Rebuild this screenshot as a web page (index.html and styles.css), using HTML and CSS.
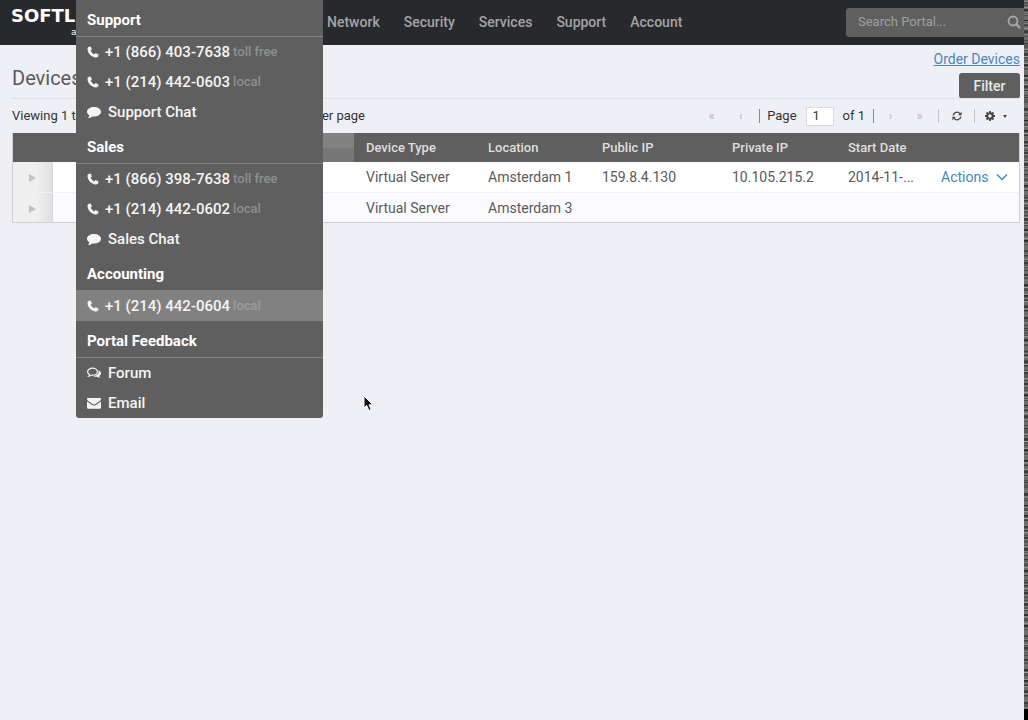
FILE: index.html
```
<!DOCTYPE html>
<html lang="en">
<head>
    <meta charset="UTF-8">
    <meta name="viewport" content="width=device-width, initial-scale=1.0">
    <title>Devices</title>
    <link rel="stylesheet" href="styles.css">
</head>
<body>

<!-- Icons shared by the menu -->
<svg class="defs" width="0" height="0" aria-hidden="true">
    <symbol id="phone" viewBox="0 0 14 14">
        <path d="M2.600.8 4.300.6 5.700 4 4.200 5.600C5 7.300 6.600 8.900 8.400 9.800L10 8.300 13.400 9.800C13.500 11.900 12.400 13.400 10.300 13.400 5.200 13.200.7 8.500.6 3.600.6 2.100 1.300 1.100 2.600.8Z"/>
    </symbol>
    <symbol id="chat" viewBox="0 0 14 14">
        <path d="M7 2C10.900 2 14 4.100 14 6.800S10.900 11.600 7 11.600C6.400 11.600 5.800 11.500 5.200 11.400 4 12.500 2.500 13 .9 13.100 1.700 12.300 2.200 11.400 2.300 10.400 .9 9.500 0 8.200 0 6.800 0 4.100 3.100 2 7 2Z"/>
    </symbol>
    <symbol id="forum" viewBox="0 0 14 14">
        <path d="M5.500 2.200C8.200 2.200 10.400 3.700 10.400 5.700S8.200 9.200 5.500 9.200L4.500 9.100C3.600 9.800 2.700 10.100 1.700 10.200 2.200 9.700 2.400 9.200 2.500 8.500 1.300 7.900 .6 6.900 .6 5.700 .6 3.700 2.800 2.200 5.500 2.200Z" fill="none" stroke="currentColor" stroke-width="1.200"/>
        <path d="M11.500 4.300C13 4.900 14 6 14 7.300 14 8.400 13.300 9.400 12.200 10 12.300 10.700 12.700 11.300 13.200 11.800 12 11.800 11 11.400 10.100 10.700 8.400 10.900 7 10.700 5.800 10 9.200 9.900 11.700 8.200 11.700 5.700Z"/>
    </symbol>
    <symbol id="mail" viewBox="0 0 14 14">
        <path d="M1 2H13Q14 2 14 3 14 4.200 12.800 5L8 8.300Q7 9 6 8.300L1.200 5Q0 4.200 0 3 0 2 1 2Z"/>
        <path d="M0 5.500 5.500 9.300Q7 10.200 8.500 9.300L14 5.500V11.500Q14 12.700 12.800 12.700H1.200Q0 12.700 0 11.500Z"/>
    </symbol>
</svg>

<div class="portal">
    <header class="topbar">
        <a class="logo" href="#">
            <span class="logo-name">SOFTL</span>
            <span class="logo-sub">an</span>
        </a>
        <nav class="nav">
            <a href="#">Network</a>
            <a href="#">Security</a>
            <a href="#">Services</a>
            <a href="#">Support</a>
            <a href="#">Account</a>
        </nav>
        <form class="search">
            <input type="text" placeholder="Search Portal..." aria-label="Search Portal">
            <button type="button" aria-label="Search">
                <svg width="14" height="14" viewBox="0 0 14 14"><circle cx="6" cy="6" r="4.500" fill="none" stroke="currentColor" stroke-width="1.800"/><path d="M9.400 9.400 12.500 12.500" stroke="currentColor" stroke-width="2.200" stroke-linecap="round"/></svg>
            </button>
        </form>
    </header>

    <main>
        <div class="page-head">
            <h1>Devices</h1>
            <div class="page-actions">
                <a href="#">Order Devices</a>
                <button type="button" class="filter">Filter</button>
            </div>
        </div>

        <div class="toolbar">
            <div class="viewing"><span>Viewing 1 to</span><span>per page</span></div>
            <div class="pager">
                <button type="button" class="step" aria-label="First page">«</button>
                <button type="button" class="step" aria-label="Previous page">‹</button>
                <span class="sep"></span>
                <label for="page">Page</label>
                <input type="text" id="page" value="1">
                <span class="of">of 1</span>
                <span class="sep"></span>
                <button type="button" class="step" aria-label="Next page">›</button>
                <button type="button" class="step" aria-label="Last page">»</button>
                <span class="sep light"></span>
                <button type="button" class="tool" aria-label="Refresh">
                    <svg width="10" height="10" viewBox="0 0 10 10"><path d="M1.200 4.500A3.800 3.800 0 0 1 8 2.700M8.800 5.500A3.800 3.800 0 0 1 2 7.300" fill="none" stroke="currentColor" stroke-width="1.400"/><path d="M9.600.8V4.300H6.100ZM.4 9.200V5.700H3.900Z" fill="currentColor"/></svg>
                </button>
                <span class="sep light"></span>
                <button type="button" class="tool gear" aria-label="Settings">
                    <svg width="10" height="10" viewBox="0 0 10 10"><circle cx="5" cy="5" r="2.700" fill="none" stroke="currentColor" stroke-width="2"/><path d="M5 0V2M5 8V10M0 5H2M8 5H10M1.500 1.500 2.800 2.800M7.200 7.200 8.500 8.500M8.500 1.500 7.200 2.800M2.800 7.200 1.500 8.500" stroke="currentColor" stroke-width="1.800"/></svg>
                    <svg width="4" height="3" viewBox="0 0 4 3"><path d="M0 0H4L2 3Z" fill="currentColor"/></svg>
                </button>
            </div>
        </div>

        <table class="devices">
            <colgroup>
                <col class="c-expand"><col class="c-select"><col><col class="c-type"><col class="c-loc"><col class="c-public"><col class="c-private"><col class="c-start"><col class="c-actions">
            </colgroup>
            <thead>
                <tr><th></th><th></th><th class="sorted"></th><th>Device Type</th><th>Location</th><th>Public IP</th><th>Private IP</th><th>Start Date</th><th></th></tr>
            </thead>
            <tbody>
                <tr>
                    <td class="expand"><svg width="7" height="8" viewBox="0 0 7 8"><path d="M0 0 7 4 0 8Z"/></svg></td>
                    <td></td><td></td><td>Virtual Server</td><td>Amsterdam 1</td><td>159.8.4.130</td><td>10.105.215.2</td><td>2014-11-...</td>
                    <td><a class="actions" href="#">Actions <svg width="12" height="8" viewBox="0 0 12 8"><path d="M1 1.500 6 6.500 11 1.500" fill="none" stroke="currentColor" stroke-width="1.500"/></svg></a></td>
                </tr>
                <tr>
                    <td class="expand"><svg width="7" height="8" viewBox="0 0 7 8"><path d="M0 0 7 4 0 8Z"/></svg></td>
                    <td></td><td></td><td>Virtual Server</td><td>Amsterdam 3</td><td></td><td></td><td></td><td></td>
                </tr>
            </tbody>
        </table>
    </main>

    <!-- Contact menu -->
    <div class="menu">
        <h2>Support</h2>
        <a class="call" href="#"><svg><use href="#phone"/></svg>+1 (866) 403-7638 <small>toll free</small></a>
        <a class="call" href="#"><svg><use href="#phone"/></svg>+1 (214) 442-0603 <small>local</small></a>
        <a href="#"><svg><use href="#chat"/></svg>Support Chat</a>
        <h2>Sales</h2>
        <a class="call" href="#"><svg><use href="#phone"/></svg>+1 (866) 398-7638 <small>toll free</small></a>
        <a class="call" href="#"><svg><use href="#phone"/></svg>+1 (214) 442-0602 <small>local</small></a>
        <a href="#"><svg><use href="#chat"/></svg>Sales Chat</a>
        <h2>Accounting</h2>
        <a class="call active" href="#"><svg><use href="#phone"/></svg>+1 (214) 442-0604 <small>local</small></a>
        <h2>Portal Feedback</h2>
        <a href="#"><svg><use href="#forum"/></svg>Forum</a>
        <a href="#"><svg><use href="#mail"/></svg>Email</a>
    </div>

    <svg class="cursor" width="12" height="18" viewBox="0 0 12 18"><path d="M1 1V13L3.700 10.500 6 15.500 8.200 14.500 6 9.800H9.800Z" fill="#111" stroke="#fff" stroke-width="1"/></svg>
</div>
<div class="edge"></div>

</body>
</html>
```
FILE: styles.css
```
* {
    box-sizing: border-box;
}

body {
    display: flex;
    min-height: 100vh;
    margin: 0;
    background: #eff0f5;
    color: #5a5a5c;
    font-family: Roboto, "Liberation Sans", sans-serif;
    font-size: 14px;
    line-height: 20px;
}

button, input {
    font: inherit;
    color: inherit;
    border: 0;
    padding: 0;
    background: none;
}

.defs {
    position: absolute;
}

.portal {
    position: relative;
    flex: 1;
    min-width: 0;
}

/* Noisy strip down the right side */
.edge {
    width: 4px;
    border-bottom: 11px solid #000;
    background:
        repeating-linear-gradient(rgba(255, 255, 255, 0.25) 0 1px, transparent 1px 7px),
        repeating-linear-gradient(rgba(0, 0, 0, 0.3) 0 1px, transparent 1px 5px),
        repeating-linear-gradient(#5c5c5c 0 1px, #7c7c7c 1px 2px, #555 2px 4px, #6c6c6c 4px 9px, #3c3c3c 9px 11px);
}

/* Top bar */
.topbar {
    display: flex;
    align-items: center;
    height: 45px;
    padding-bottom: 1px;
    background: #28292d;
}

.logo {
    width: 315px;
    padding-left: 11px;
    color: #fff;
    text-decoration: none;
    font-family: "DejaVu Sans", sans-serif;
}

.logo span {
    display: block;
    width: 70px;
}

.logo-name {
    font-size: 18px;
    font-weight: bold;
    line-height: 20px;
}

.logo-sub {
    padding-left: 60px;
    font-size: 9px;
    line-height: 12px;
}

.nav {
    display: flex;
    gap: 24px;
    padding-left: 12px;
    font-weight: 500;
}

.nav a {
    color: #a3a3a5;
    text-decoration: none;
}

.search {
    display: flex;
    align-items: center;
    width: 178px;
    height: 29px;
    margin-left: auto;
    padding: 0 3px 0 12px;
    border-radius: 3px 0 0 3px;
    background: #5f5f5f;
    color: #a8a8a8;
    font-size: 13px;
}

.search input {
    flex: 1;
    min-width: 0;
}

.search input::placeholder {
    color: #a0a0a0;
}

.search button {
    display: flex;
}

/* Page heading */
main {
    padding: 0 4px 0 12px;
}

.page-head {
    display: flex;
    justify-content: space-between;
    height: 54px;
    border-bottom: 1px solid #e2e2e5;
}

h1 {
    margin: 0;
    padding-top: 21px;
    font-size: 20px;
    font-weight: normal;
    line-height: 24px;
}

.page-actions {
    display: flex;
    flex-direction: column;
    align-items: flex-end;
    gap: 4px;
    padding-top: 4px;
}

.page-actions a {
    color: #4b86bd;
}

.filter {
    width: 61px;
    height: 25px;
    border-radius: 3px 3px 2px 2px;
    background: #5f5f5f;
    color: #e8e8e8;
    font-weight: 500;
}

.toolbar {
    display: flex;
    justify-content: space-between;
    align-items: center;
    height: 34px;
    color: #333;
    font-size: 13px;
}

.viewing {
    display: flex;
    justify-content: space-between;
    width: 353px;
}

.pager {
    display: flex;
    align-items: center;
    padding-right: 12px;
}

.step {
    width: 29px;
    color: #b5b5b8;
}

.sep {
    width: 1px;
    height: 14px;
    margin: 0 2px 0 4px;
    background: #8a8a8c;
}

.sep.light {
    margin: 0 4px;
    background: #c4c4c6;
}

.pager label {
    padding: 0 9px 0 5px;
}

.pager input {
    width: 28px;
    height: 19px;
    padding-left: 6px;
    border: 1px solid #dcdce0;
    background: #fff;
}

.of {
    padding: 0 4px 0 9px;
}

.tool {
    display: flex;
    justify-content: center;
    align-items: center;
    width: 27px;
    color: #444;
}

.gear {
    gap: 8px;
    width: 29px;
    padding-left: 4px;
}

/* Device list */
.devices {
    width: 100%;
    table-layout: fixed;
    border-collapse: separate;
    border-spacing: 0;
    border: 1px solid #cfcfd3;
    border-top: 0;
}

.c-expand { width: 40px; }
.c-select { width: 36px; }
.c-type { width: 122px; }
.c-loc { width: 114px; }
.c-public { width: 130px; }
.c-private { width: 116px; }
.c-start { width: 93px; }
.c-actions { width: 90px; }

.devices th {
    height: 29px;
    padding: 0 0 0 12px;
    background: #5f5f5f;
    color: #dedede;
    font-size: 13px;
    font-weight: 500;
    text-align: left;
}

.devices th.sorted {
    background: linear-gradient(#828282 50%, #777 50%);
}

.devices td {
    height: 30px;
    padding: 0 0 0 12px;
    background: #fff;
    white-space: nowrap;
}

.devices tr + tr td {
    border-top: 1px solid #f1f1f5;
    background: #fafaff;
}

.devices td.expand,
.devices tr + tr td.expand {
    padding: 0;
    border-right: 1px solid #d8d8da;
    background: linear-gradient(to right, #f0f0f0 60%, #e0e0e2);
    text-align: center;
}

.expand svg {
    fill: #c2c2c4;
}

.actions {
    display: flex;
    align-items: center;
    gap: 8px;
    color: #4288c4;
    text-decoration: none;
}

/* Contact menu */
.menu {
    position: absolute;
    top: 0;
    left: 76px;
    width: 247px;
    border-radius: 0 0 3px 3px;
    background: #5f5f5f;
    color: #f5f5f5;
    font-size: 15px;
}

.menu h2 {
    margin: 0;
    padding: 8px 11px 4px;
    border-bottom: 1px solid #828282;
    color: #fff;
    font-size: 15px;
    font-weight: bold;
    line-height: 24px;
}

.menu a {
    display: flex;
    align-items: center;
    height: 30px;
    padding: 0 11px;
    color: inherit;
    font-weight: 500;
    text-decoration: none;
}

.menu svg {
    width: 14px;
    height: 14px;
    margin-right: 7px;
    fill: currentColor;
}

.menu .call svg {
    width: 12px;
    height: 12px;
    margin-right: 6px;
}

.menu small {
    margin-left: 3px;
    color: #8f8f8f;
    font-size: 13px;
}

.menu a.active {
    background: #818181;
}

.menu .active small {
    color: #9c9c9c;
}

.cursor {
    position: absolute;
    top: 395px;
    left: 363px;
}
```
